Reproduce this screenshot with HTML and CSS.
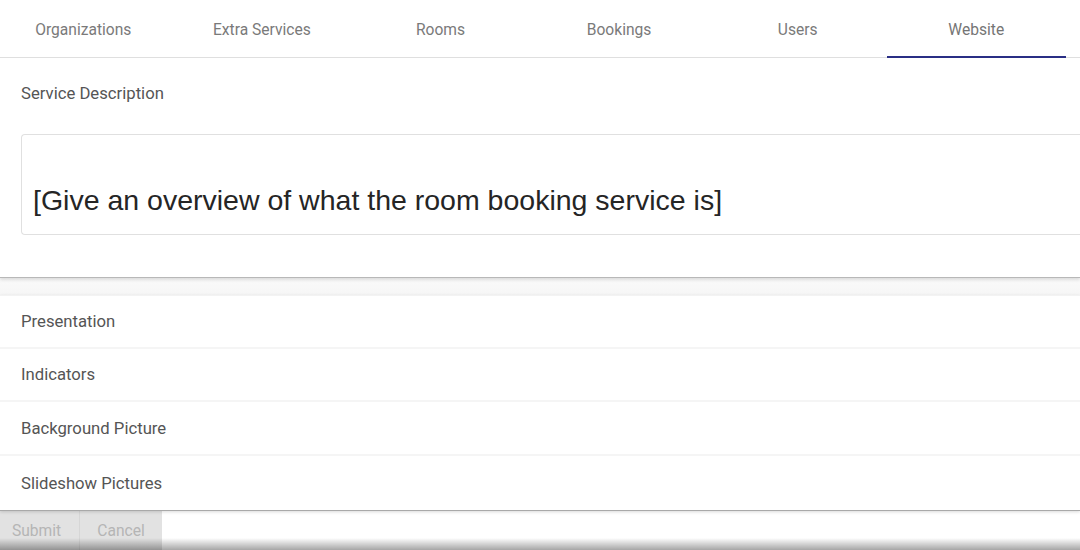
FILE: index.html
```html
<!DOCTYPE html>
<html>
<head>
<meta charset="utf-8">
<link rel="stylesheet" href="styles.css">
</head>
<body>
<div class="page">
  <nav class="tabs">
    <div class="tab">Organizations</div>
    <div class="tab">Extra Services</div>
    <div class="tab">Rooms</div>
    <div class="tab">Bookings</div>
    <div class="tab">Users</div>
    <div class="tab active">Website</div>
  </nav>
  <section class="panel expanded">
    <div class="panel-title">Service Description</div>
    <div class="editor">
      <p>[Give an overview of what the room booking service is]</p>
    </div>
  </section>
  <div class="spacer"></div>
  <div class="panels">
    <section class="panel row">Presentation</section>
    <section class="panel row short">Indicators</section>
    <section class="panel row">Background Picture</section>
    <section class="panel row last">Slideshow Pictures</section>
  </div>
  <footer class="actions">
    <button class="btn">Submit</button>
    <button class="btn">Cancel</button>
  </footer>
  <div class="bottom-shade"></div>
</div>
</body>
</html>
```

FILE: styles.css
```css
html, body {
  margin: 0;
  padding: 0;
  background: #ffffff;
  font-family: Roboto, "Noto Sans", Arial, sans-serif;
  overflow: hidden;
}
.page {
  width: 1080px;
  height: 550px;
  position: relative;
  overflow: hidden;
}
.tabs {
  display: flex;
  height: 57px;
  border-bottom: 1px solid #e0e0e0;
  margin-left: -6px;
}
.tab {
  flex: 0 0 178.6px;
  display: flex;
  align-items: center;
  justify-content: center;
  font-size: 15.6px;
  color: #7a7a7a;
  box-sizing: border-box;
  padding-top: 3px;
}
.tab.active {
  color: #757575;
  border-bottom: 2px solid #2a2f85;
  margin-bottom: -1px;
}
.panel.expanded {
  height: 220px;
  box-sizing: border-box;
  padding: 26px 0 0 21px;
  border-bottom: 1px solid #b8b8b8;
  box-shadow: 0 2px 3px rgba(0,0,0,0.12);
  position: relative;
}
.panel-title {
  font-size: 16.7px;
  color: #555;
  line-height: 20px;
}
.editor {
  margin-top: 30px;
  height: 101px;
  box-sizing: border-box;
  border: 1px solid #e0e0e0;
  border-right: none;
  border-radius: 4px 0 0 4px;
  padding: 49px 0 0 11px;
}
.editor p {
  margin: 0;
  font-family: "Liberation Sans", Arial, sans-serif;
  font-size: 28.5px;
  line-height: 32px;
  color: #252525;
}
.spacer {
  height: 17px;
  background: linear-gradient(#fafafa, #f6f6f6);
}
.panels {
  border-bottom: 1px solid #a9a9a9;
  box-shadow: 0 1px 3px rgba(0,0,0,0.15);
  position: relative;
}
.panel.row {
  height: 54px;
  box-sizing: border-box;
  display: flex;
  align-items: center;
  padding-left: 21px;
  font-size: 16.7px;
  color: #555;
  border-bottom: 2px solid #f5f5f5;
}
.panel.row.short {
  height: 53px;
}
.panel.row:first-child {
  border-top: 1px solid #f3f3f3;
}
.panel.row.last {
  border-bottom: none;
  height: 54px;
}
.actions {
  display: flex;
  height: 39px;
}
.btn {
  border: none;
  margin: 0;
  height: 39px;
  background: #e2e2e2;
  color: #b5b5b5;
  font-family: Roboto, Arial, sans-serif;
  font-size: 15.6px;
  padding: 0;
}
.btn:first-child {
  width: 80px;
  padding-right: 6px;
  border-right: 1px solid #d6d6d6;
}
.btn + .btn {
  width: 82px;
}
.bottom-shade {
  position: absolute;
  left: 0;
  right: 0;
  bottom: 0;
  height: 12px;
  background: linear-gradient(rgba(0,0,0,0), rgba(0,0,0,0.35));
}
```
